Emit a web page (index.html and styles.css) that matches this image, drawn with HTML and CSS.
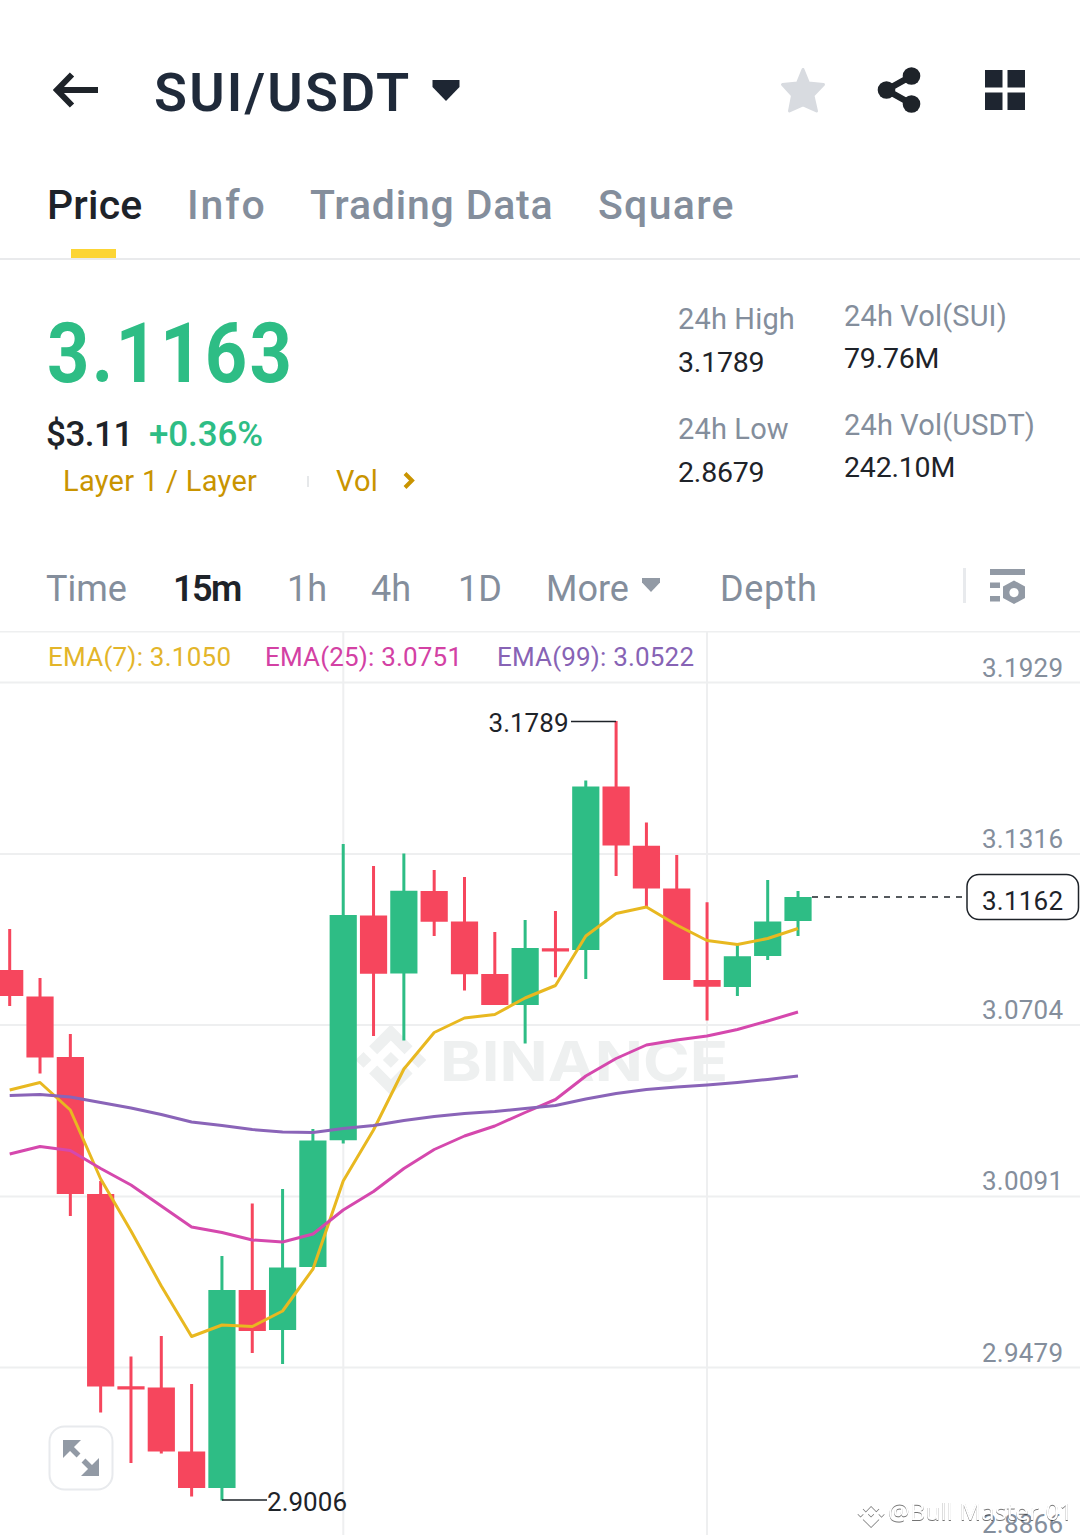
FILE: index.html
```html
<!DOCTYPE html>
<html lang="en">
<head>
<meta charset="utf-8">
<title>SUI/USDT</title>
<link rel="stylesheet" href="styles.css">
</head>
<body>
<header class="header">
  <svg class="back" width="46" height="38" viewBox="0 0 46 38"><path d="M45 19H5M19 3.500L4 19L19 34.500" fill="none" stroke="#1e2329" stroke-width="6"/></svg>
  <h1 class="pair">SUI/USDT</h1>
  <svg class="pair-caret" width="28" height="22" viewBox="0 0 28 22"><path d="M.5 0H27.500V7L14 21L.5 7z" fill="#1e2633"/></svg>
  <div class="actions">
    <svg width="46" height="46" viewBox="0 0 46 46"><path d="M23 2.500L28.500 16L43.500 17.500L33 28.500L36.500 44L23 38L9.500 44L12.500 28.500L2.500 17.500L17.500 16z" fill="#d8dbe0" stroke="#d8dbe0" stroke-width="3" stroke-linejoin="round"/></svg>
    <svg width="44" height="46" viewBox="0 0 44 46"><path d="M34.500 9L9.500 23L34.500 37" fill="none" stroke="#1e2329" stroke-width="6.500"/><g fill="#1e2329"><circle cx="34.500" cy="9" r="8.800"/><circle cx="9.500" cy="23" r="8.800"/><circle cx="34.500" cy="37" r="8.800"/></g></svg>
    <svg width="40" height="40" viewBox="0 0 40 40"><path d="M0 0H17.500V17.500H0zM22.500 0H40V17.500H22.500zM0 22.500H17.500V40H0zM22.500 22.500H40V40H22.500z" fill="#1e2530"/></svg>
  </div>
</header>
<nav class="tabs">
  <a class="tab active">Price</a>
  <a class="tab">Info</a>
  <a class="tab trading">Trading Data</a>
  <a class="tab square">Square</a>
</nav>
<section class="summary">
  <div class="quote">
    <div class="last">3.1163</div>
    <div class="sub"><span class="usd">$3.11</span><span class="change">+0.36%</span></div>
    <div class="tags"><span>Layer 1 / Layer</span><i class="tag-rule"></i><span>Vol</span><svg width="12" height="18" viewBox="0 0 12 18"><path d="M2 1.500L9 8.500L2 15.500" fill="none" stroke="#c99400" stroke-width="4"/></svg></div>
  </div>
  <dl class="stats low">
    <dt>24h High</dt><dd>3.1789</dd>
    <dt>24h Low</dt><dd>2.8679</dd>
  </dl>
  <dl class="stats">
    <dt>24h Vol(SUI)</dt><dd>79.76M</dd>
    <dt>24h Vol(USDT)</dt><dd>242.10M</dd>
  </dl>
</section>
<nav class="intervals">
  <a class="iv time">Time</a><a class="iv m15 on">15m</a><a class="iv h1">1h</a><a class="iv h4">4h</a><a class="iv d1">1D</a><a class="iv more">More</a>
  <svg class="more-caret" width="18" height="14" viewBox="0 0 18 14"><path d="M0 0H18V4.500L9 14L0 4.500z" fill="#929aa5"/></svg>
  <a class="iv depth">Depth</a>
  <i class="iv-rule"></i>
  <svg class="settings" width="36" height="38" viewBox="0 0 36 38"><path d="M0 1H35V7H0zM0 14.500H10V20H0zM0 28H10V33.500H0z" fill="#929aa5"/><path fill-rule="evenodd" d="M24 12.500L35 18.500V30L24 36L13 30V18.500zM24 20a4.600 4.600 0 1 0 .01 0z" fill="#929aa5"/></svg>
</nav>
<main class="chart">
<svg class="plot" width="1080" height="904" viewBox="0 631 1080 904">
  <path class="grid" d="M0 631.500H1080M0 682.500H1080M0 854H1080M0 1025H1080M0 1196.500H1080M0 1367.500H1080M343.300 632V1535M707 632V1535"/>
  <g class="brand">
    <path transform="translate(355.500 1024.500) scale(2.950)" d="M16.624 13.920l2.717 2.715-7.353 7.353-7.353-7.352 2.717-2.716 4.636 4.659 4.636-4.659zM21.260 9.284L24 12l-2.715 2.716L18.568 12zM11.988 9.285l2.716 2.691-2.716 2.717L9.272 12zM2.716 9.284L5.409 12l-2.692 2.692L0 12zM11.988.012l7.353 7.329-2.717 2.715-4.636-4.636-4.635 4.660-2.717-2.715z"/>
    <text x="440" y="1081" textLength="288" lengthAdjust="spacingAndGlyphs">BINANCE</text>
  </g>
  <g class="ema-labels">
    <text class="c7" x="48" y="666" textLength="183">EMA(7): 3.1050</text>
    <text class="c25" x="265" y="666" textLength="197">EMA(25): 3.0751</text>
    <text class="c99" x="497" y="666" textLength="197">EMA(99): 3.0522</text>
  </g>
  <g id="candles"></g>
  <g class="lines">
    <polyline class="l7" points="9.700,1090 40,1082.500 70.300,1110 100.700,1179 131,1231 161.300,1286 191.600,1336.500 222,1325 252.300,1326.500 282.600,1311 313,1269 343.200,1181 373.500,1130 403.900,1069 434.200,1032.500 464.500,1018 494.800,1014.500 525.100,998 555.500,985.500 585.800,936 616.100,913.500 646.400,907 676.700,925 707,940.500 737.400,944.500 767.700,938.500 798,928.500"/>
    <polyline class="l25" points="9.700,1154 40,1146.500 70.300,1150.500 100.700,1168.500 131,1185 161.300,1206 191.600,1227 222,1232.500 252.300,1240 282.600,1242 313,1234 343.200,1210 373.500,1191.500 403.900,1168.500 434.200,1149.500 464.500,1136 494.800,1126 525.100,1112.500 555.500,1099.500 585.800,1076 616.100,1058.500 646.400,1045 676.700,1040 707,1036 737.400,1029.500 767.700,1021 798,1012"/>
    <polyline class="l99" points="9.700,1095.500 40,1094.500 70.300,1097 100.700,1102.500 131,1108 161.300,1114.500 191.600,1122 222,1125.500 252.300,1129.500 282.600,1132 313,1132.500 343.200,1128.500 373.500,1125.500 403.900,1120.500 434.200,1116.500 464.500,1113.500 494.800,1111.500 525.100,1108.500 555.500,1105.500 585.800,1099 616.100,1093.500 646.400,1089.500 676.700,1087 707,1085 737.400,1082.500 767.700,1079.500 798,1076"/>
  </g>
  <path class="marker" d="M571 721.500H616M222 1500H267"/>
  <g class="marker-text">
    <text x="488.500" y="732" textLength="80">3.1789</text>
    <text x="267" y="1511" textLength="80">2.9006</text>
  </g>
  <path class="last-line" d="M812 897H962"/>
  <rect class="price-tag" x="967" y="874.500" width="111.500" height="45" rx="12"/>
  <g class="marker-text"><text x="982" y="910" textLength="81">3.1162</text></g>
  <g class="axis">
    <text x="982" y="677" textLength="81">3.1929</text>
    <text x="982" y="848" textLength="81">3.1316</text>
    <text x="982" y="1019" textLength="81">3.0704</text>
    <text x="982" y="1190" textLength="81">3.0091</text>
    <text x="982" y="1362" textLength="81">2.9479</text>
    <text x="982" y="1533" textLength="81">2.8866</text>
  </g>
  <g class="expand">
    <rect x="49.500" y="1426.500" width="63" height="63" rx="15"/>
    <path d="M63 1440H81L63 1458zM99 1476H81L99 1458z"/>
    <path class="stem" d="M69 1446L78.500 1455.500M93 1470L83.500 1460.500"/>
  </g>
  <g class="credit">
    <path transform="translate(857.500 1500) scale(1.130)" d="M16.624 13.920l2.717 2.715-7.353 7.353-7.353-7.352 2.717-2.716 4.636 4.659 4.636-4.659zM21.260 9.284L24 12l-2.715 2.716L18.568 12zM11.988 9.285l2.716 2.691-2.716 2.717L9.272 12zM2.716 9.284L5.409 12l-2.692 2.692L0 12zM11.988.012l7.353 7.329-2.717 2.715-4.636-4.636-4.635 4.660-2.717-2.715z"/>
    <text x="888" y="1520" textLength="185">@Bull Master 01</text>
  </g>
</svg>
</main>
<script src="chart.js"></script>
</body>
</html>
```
FILE: styles.css
```css
* { box-sizing: border-box; }
body { margin: 0; width: 1080px; height: 1535px; overflow: hidden; background: #fff; font-family: Roboto, "Liberation Sans", sans-serif; color: #1e2329; display: flex; flex-direction: column; }
svg { display: block; flex: none; }
i { display: block; flex: none; }

.header { height: 150px; padding: 30px 55px 0 53px; display: flex; align-items: center; }
.pair { margin: 6px 0 0 55px; width: 280px; font-size: 54px; line-height: 64px; font-weight: 600; letter-spacing: 2.200px; color: #1f2a3a; }
.pair-caret { margin: 2px 0 0 -2px; }
.actions { margin-left: auto; display: flex; align-items: center; }
.actions svg + svg { margin-left: 51px; }
.actions svg:last-child { margin-left: 64px; }

.tabs { height: 110px; border-bottom: 2px solid #e9eaec; padding: 29px 0 0 47px; display: flex; align-items: flex-start; font-size: 41px; line-height: 52px; font-weight: 500; color: #848e9c; }
.tab { width: 140px; height: 79px; letter-spacing: 1.900px; white-space: nowrap; }
.tab:nth-child(2) { width: 123px; }
.tab.trading { width: 288px; letter-spacing: .8px; }
.tab.square { letter-spacing: 1.300px; }
.tab.active { color: #1e2329; letter-spacing: .2px; }
.active::after { content: ""; display: block; width: 45px; height: 9px; margin: 18px 0 0 24px; background: #fcd535; }

.summary { height: 280px; display: flex; padding-left: 47px; }
.quote { width: 631px; padding-top: 52px; }
.last { font-size: 83px; line-height: 84px; font-weight: 700; letter-spacing: 2.500px; color: #2ebd85; transform: scaleX(.892); transform-origin: 0 0; }
.sub { display: flex; align-items: center; margin: 19px 0 0 -1px; font-size: 35px; line-height: 40px; font-weight: 500; }
.usd { width: 103px; letter-spacing: -.5px; }
.change { color: #2ebd85; letter-spacing: -.1px; }
.tags { display: flex; align-items: center; margin: 8px 0 0 16px; font-size: 29px; line-height: 36px; color: #c99400; }
.tags span:first-child { width: 244px; letter-spacing: .3px; }
.tags span:nth-child(3) { width: 67px; letter-spacing: .2px; }
.tag-rule { width: 2px; height: 11px; background: #e6e8ea; margin-right: 27px; }
.stats { margin: 0 0 0 1px; padding-top: 38px; width: 165px; white-space: nowrap; }
.stats.low { margin: 0; padding-top: 41px; }
.stats dt { font-size: 29px; line-height: 37px; letter-spacing: .15px; color: #848e9c; }
.stats dd { margin: 5px 0 29px; font-size: 28.500px; line-height: 38px; letter-spacing: -.2px; }
.stats.low dd { margin: 6px 0 29px; }

.intervals { height: 91px; padding-left: 46px; display: flex; align-items: center; font-size: 36px; line-height: 44px; color: #848e9c; }
.iv { padding-top: 6px; }
.time { width: 127px; }
.m15 { width: 114px; }
.h1 { width: 84px; }
.h4 { width: 87px; }
.d1 { width: 88px; }
.more { width: 96px; }
.more-caret { margin-top: -1px; }
.depth { width: 243px; margin-left: 60px; letter-spacing: .6px; }
.on { font-weight: 600; letter-spacing: -1.600px; color: #1e2329; }
.iv-rule { width: 3px; height: 35px; background: #e8eaed; margin-right: 24px; }
.settings { margin-top: 2px; }

.chart { height: 904px; }
.grid { stroke: #eeeff0; stroke-width: 2; fill: none; }
.brand { fill: #eef0f0; font: 700 55px Inter, sans-serif; }
.ema-labels { font-size: 26px; }
.c7 { fill: #e3b52a; }
.c25 { fill: #d341a4; }
.c99 { fill: #8763b5; }
.up { fill: #2ebd85; }
.down { fill: #f6465d; }
.lines { fill: none; stroke-width: 3; stroke-linejoin: round; }
.l7 { stroke: #e8b820; }
.l25 { stroke: #d548ad; }
.l99 { stroke: #8a64b8; }
.marker { stroke: #1e2329; stroke-width: 1.500; fill: none; }
.marker-text { font-size: 26px; fill: #1e2329; }
.last-line { stroke: #1e2329; stroke-width: 1.600; stroke-dasharray: 6 6; }
.price-tag { fill: #fff; stroke: #1e2329; stroke-width: 1.500; }
.axis { font-size: 26px; fill: #848e9c; }
.expand rect { fill: #fff; stroke: #e8eaed; stroke-width: 2; }
.expand path { fill: #929aa5; }
.expand .stem { fill: none; stroke: #929aa5; stroke-width: 5.500; }
.credit { fill: #fff; font: 24px "Noto Sans", sans-serif; filter: drop-shadow(.5px 1px .6px rgba(0,0,0,.55)); }
```
FILE: chart.js
```js
// direction, high, body top, body bottom, low
const candles = [
  ["down", 929, 970, 996, 1006], ["down", 978, 996.5, 1057.5, 1073.5], ["down", 1034, 1057, 1194, 1216],
  ["down", 1181, 1194, 1386.5, 1412.5], ["down", 1356.5, 1386.3, 1389.5, 1463], ["down", 1336, 1387.5, 1451.5, 1453.5],
  ["down", 1384, 1451.5, 1488, 1496.5], ["up", 1256, 1290, 1488, 1500.5], ["down", 1203.5, 1290, 1331, 1353],
  ["up", 1189, 1267.5, 1330, 1364], ["up", 1129, 1140.5, 1267, 1267], ["up", 844, 915, 1140.3, 1143.5],
  ["down", 866, 915.5, 973.7, 1036], ["up", 853.5, 890.7, 973.5, 1040.5], ["down", 870, 891, 921.7, 936],
  ["down", 877, 921.5, 974.3, 990.5], ["down", 932, 974, 1005, 1005], ["up", 920, 948, 1005, 1043.5],
  ["down", 911, 948.2, 951.4, 977.3], ["up", 780.5, 786.5, 950, 979], ["down", 721, 786.5, 845.5, 876],
  ["down", 822.5, 845.7, 888.5, 907], ["down", 855, 888.5, 980, 980], ["down", 902.3, 980, 986.7, 1020.5],
  ["up", 944, 956.3, 987, 996], ["up", 880, 921.5, 956, 960], ["up", 891, 897, 921, 936]
];
document.getElementById("candles").innerHTML = candles.map(([dir, high, top, bottom, low], i) => {
  const x = 9.7 + i * 30.32;
  return `<path class="${dir}" d="M${x - 1.5} ${high}h3V${low}h-3zM${x - 13.6} ${top}h27.2V${bottom}h-27.2z"/>`;
}).join("");
```
